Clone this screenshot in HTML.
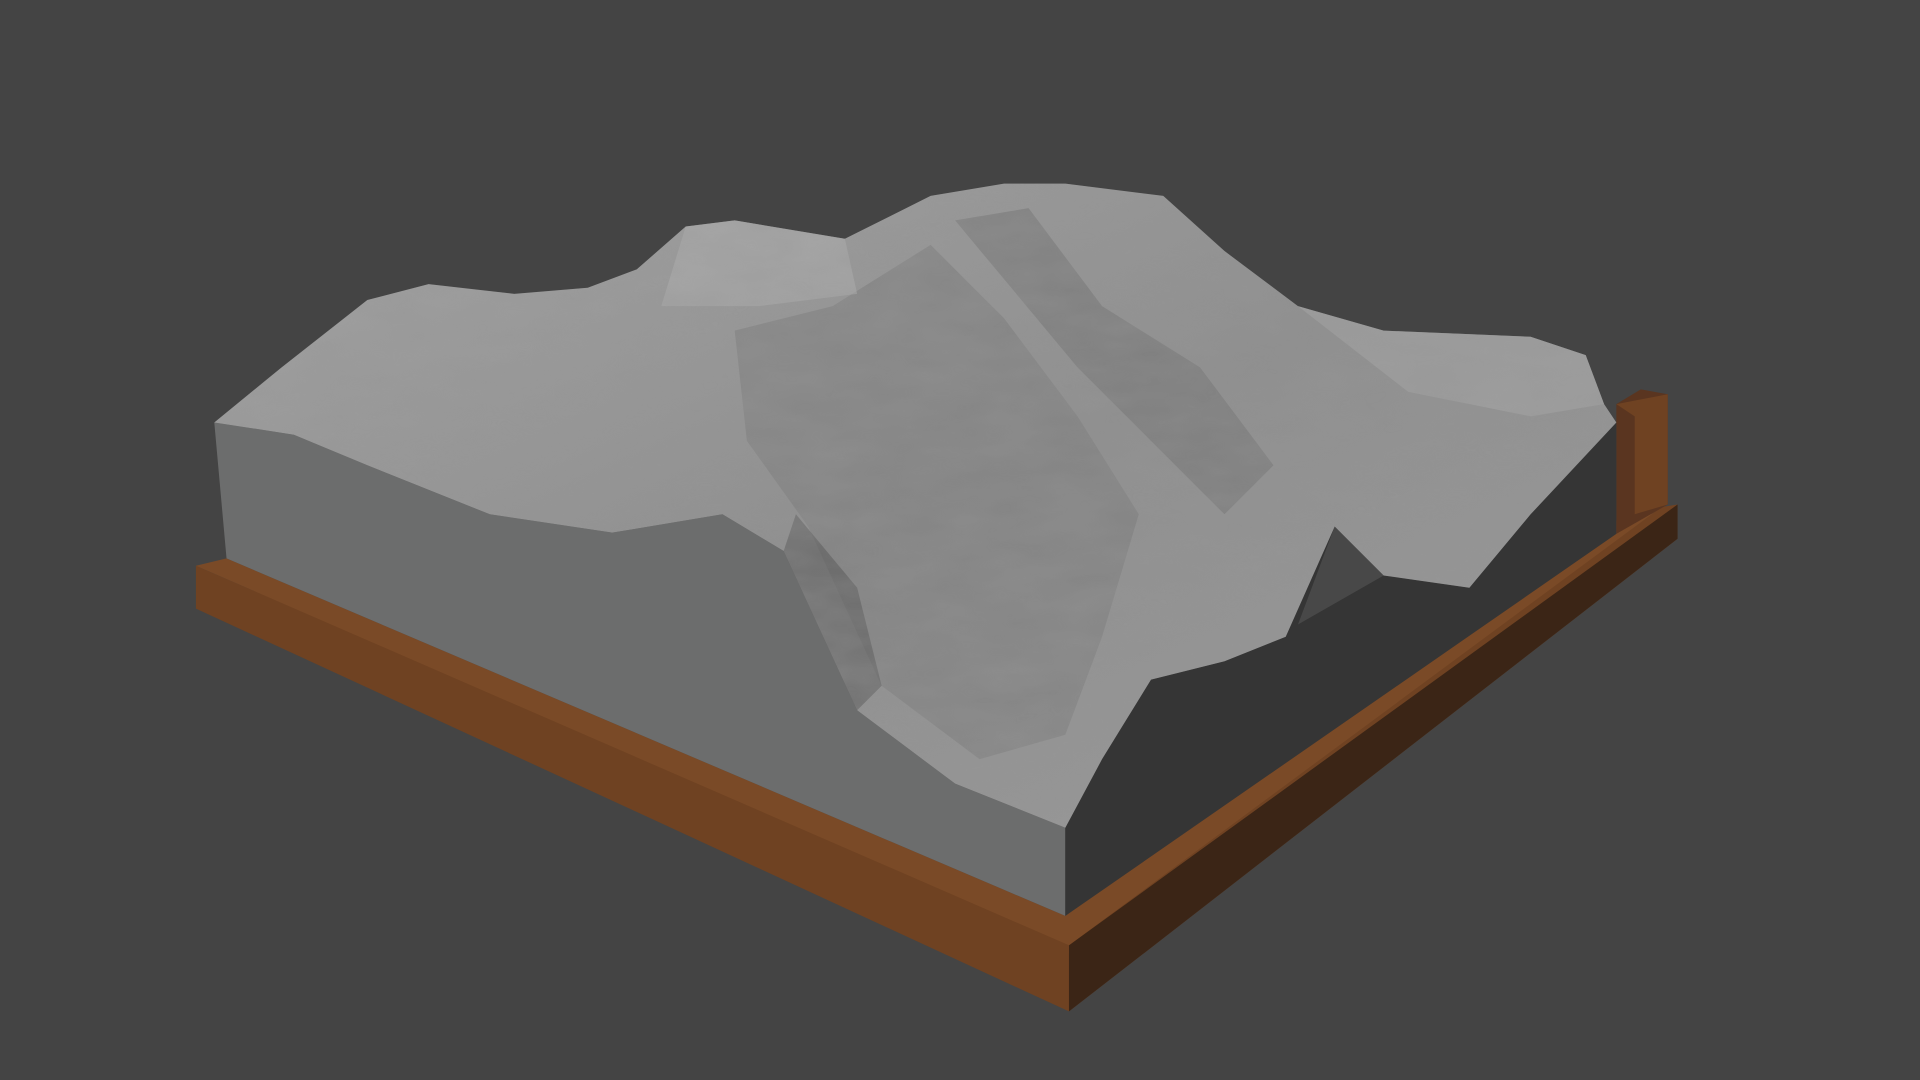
<!DOCTYPE html>
<html><head><meta charset="utf-8"><style>
html,body{margin:0;padding:0;background:#444444;width:1920px;height:1080px;overflow:hidden}
svg{display:block}
</style></head><body>
<svg width="1920" height="1080" viewBox="0 0 1568 882" preserveAspectRatio="none" xmlns="http://www.w3.org/2000/svg">
<defs>
<linearGradient id="ter" x1="0" y1="0" x2="1" y2="1">
<stop offset="0" stop-color="#a3a3a3"/><stop offset="0.5" stop-color="#8f8f8f"/><stop offset="1" stop-color="#9a9a9a"/>
</linearGradient>
<filter id="n"><feTurbulence type="fractalNoise" baseFrequency="0.02 0.05" numOctaves="3" seed="4"/><feColorMatrix values="0 0 0 0 0.3 0 0 0 0 0.3 0 0 0 0 0.3 0 0 0 0.5 -0.1"/><feComposite in2="SourceGraphic" operator="in"/></filter>
</defs>
<rect width="1568" height="882" fill="#444444"/>
<!-- brown base -->
<polygon points="160,462 873,770 1357,414 1370,412 1370,440 873,826 160,497" fill="#6f4222"/>
<polygon points="873,772 1370,412 1370,440 873,826" fill="#3b2516"/>
<polygon points="160,462 185,456 870,748 1320,425 1357,414 873,772" fill="#7a4a27"/>
<polygon points="1320,330 1340,318 1362,322 1362,412 1320,436" fill="#5a3520"/>
<polygon points="1320,330 1362,322 1362,412 1335,420 1335,340" fill="#6f4222"/>
<!-- gray block faces following terrain profile -->
<polygon points="175,345 240,355 300,380 400,420 500,435 590,420 640,450 700,580 780,640 870,676 870,748 185,456" fill="#6c6d6d"/>
<polygon points="870,676 900,620 940,555 1000,540 1050,520 1090,430 1130,470 1200,480 1250,420 1320,345 1320,436 870,748" fill="#353535"/>
<!-- terrain -->
<polygon id="t" points="175,345 230,300 300,245 350,232 420,240 480,235 520,220 560,185 600,180 690,195 760,160 820,150 870,150 950,160 1000,205 1060,250 1130,270 1250,275 1295,290 1310,330 1320,345 1250,420 1200,480 1130,470 1090,430 1050,520 1000,540 940,555 900,620 870,676 780,640 700,580 640,450 590,420 500,435 400,420 300,380 240,355" fill="url(#ter)"/>
<polygon points="600,270 680,250 760,200 820,260 880,340 930,420 900,520 870,600 800,620 720,560 660,430 610,360" fill="#7e7e7e" opacity="0.55"/>
<polygon points="780,180 840,170 900,250 980,300 1040,380 1000,420 940,360 880,300" fill="#727272" opacity="0.5"/>
<polygon points="560,185 600,180 690,195 700,240 620,250 540,250" fill="#b0b0b0" opacity="0.5"/>
<polygon points="1060,250 1130,270 1250,275 1295,290 1310,330 1250,340 1150,320" fill="#a8a8a8" opacity="0.5"/>
<polygon points="650,420 700,480 720,560 700,580 640,450" fill="#555" opacity="0.5"/>
<polygon points="1090,430 1130,470 1060,510" fill="#666" opacity="0.4"/>
<use href="#t" filter="url(#n)"/>
</svg>
</body></html>
